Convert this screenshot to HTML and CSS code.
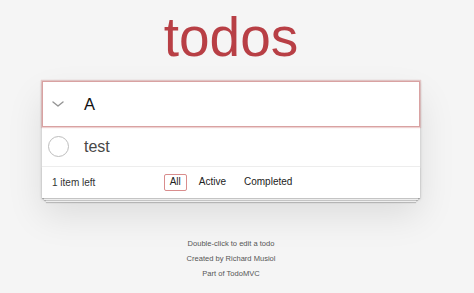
FILE: index.html
```html
<!DOCTYPE html>
<html>
<head>
<meta charset="utf-8">
<link rel="stylesheet" href="styles.css">
</head>
<body>
<div class="page">
  <h1 class="title">todos</h1>
  <section class="todoapp">
    <div class="new-todo">
      <span class="toggle-all">
        <svg width="12" height="6" viewBox="0 0 12 6"><path d="M1 1 L6 5 L11 1" fill="none" stroke="#949494" stroke-width="1.4" stroke-linecap="round" stroke-linejoin="round"/></svg>
      </span>
      <span class="new-text">A</span>
    </div>
    <ul class="todo-list">
      <li class="todo">
        <span class="check"></span>
        <span class="todo-text">test</span>
      </li>
    </ul>
    <footer class="footer">
      <span class="count">1 item left</span>
      <ul class="filters">
        <li><a class="filter selected">All</a></li>
        <li><a class="filter">Active</a></li>
        <li><a class="filter">Completed</a></li>
      </ul>
      <span></span>
    </footer>
  </section>
  <footer class="info">
    <p>Double-click to edit a todo</p>
    <p>Created by Richard Musiol</p>
    <p>Part of TodoMVC</p>
  </footer>
</div>
</body>
</html>
```
FILE: styles.css
```css
html, body {
  margin: 0;
  padding: 0;
}
body {
  background: #f5f5f5;
  font-family: "Liberation Sans", Arial, sans-serif;
  font-size: 10px;
  color: #111;
}
.page {
  width: 462px;
}
.title {
  margin: 10px 0 0;
  font-size: 55px;
  line-height: 55px;
  font-weight: normal;
  color: #b83f45;
  text-align: center;
}
.todoapp {
  position: relative;
  width: 378px;
  margin: 16px auto 0;
  background: #fff;
  box-shadow: 0 1px 3px rgba(0,0,0,0.2), 0 17px 34px rgba(0,0,0,0.1);
}
.new-todo {
  display: flex;
  align-items: center;
  height: 46px;
  box-sizing: border-box;
  border: 1px solid #d9a2a2;
  box-shadow: 0 0 1px 1px rgba(207,125,125,0.35);
}
.toggle-all {
  width: 30px;
  display: flex;
  justify-content: center;
  align-items: center;
}
.toggle-all svg {
  display: block;
}
.new-text {
  margin-left: 11px;
  font-size: 16.5px;
  line-height: 20px;
  color: #111;
}
.todo-list {
  list-style: none;
  margin: 0;
  padding: 0;
}
.todo {
  display: flex;
  align-items: center;
  height: 40px;
  box-sizing: border-box;
  border-bottom: 1px solid #ededed;
}
.check {
  width: 19px;
  height: 19px;
  margin-left: 6px;
  border: 1px solid #bdbdbd;
  border-radius: 50%;
}
.todo-text {
  margin-left: 15px;
  font-size: 16px;
  line-height: 20px;
  color: #484848;
}
.footer {
  position: relative;
  display: grid;
  grid-template-columns: 1fr auto 1fr;
  align-items: center;
  height: 31px;
  padding: 0 10px;
  color: #333;
  line-height: 12px;
}
.footer::before {
  content: "";
  position: absolute;
  left: 0;
  right: 0;
  bottom: 0;
  height: 31px;
  box-shadow: 0 1px 1px rgba(0,0,0,0.2), 0 4px 0 -2px #f6f6f6, 0 5px 1px -2px rgba(0,0,0,0.2), 0 8px 0 -4px #f6f6f6, 0 9px 1px -4px rgba(0,0,0,0.2);
  pointer-events: none;
}
.count {
  position: relative;
}
.filters {
  position: relative;
  list-style: none;
  margin: 0;
  padding: 0;
  display: flex;
  gap: 6px;
}
.filter {
  display: block;
  padding: 1px 5px 2px;
  border: 1px solid transparent;
  border-radius: 2px;
  color: #222;
}
.filter.selected {
  border-color: #d98d8d;
}
.info {
  margin-top: 38px;
  text-align: center;
  font-size: 7.56px;
  color: #555;
}
.info p {
  margin: 0;
  line-height: 15px;
}
```
